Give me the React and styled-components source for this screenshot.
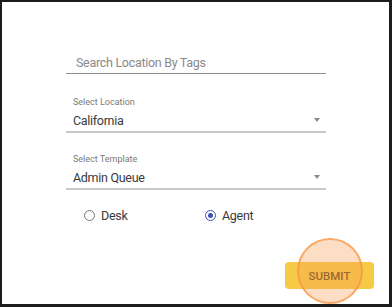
import React from 'react';
import styled, { createGlobalStyle } from 'styled-components';

const GlobalStyle = createGlobalStyle`
  html, body {
    margin: 0;
    padding: 0;
    background: #fff;
    font-family: Roboto, "Liberation Sans", Arial, sans-serif;
  }
`;

const Frame = styled.div`
  box-sizing: border-box;
  width: 392px;
  height: 307px;
  border: 2px solid #1c1c1c;
  border-right-width: 3px;
  border-bottom-width: 3px;
  padding: 51px 0 0 64px;
  display: flex;
  flex-direction: column;
`;

const Form = styled.div`
  width: 260px;
  display: flex;
  flex-direction: column;
`;

const SearchInput = styled.div`
  height: 20px;
  line-height: 20px;
  padding-left: 10px;
  font-size: 12.5px;
  letter-spacing: -0.3px;
  color: #8a8a8a;
  border-bottom: 1px solid #8c8c8c;
`;

const Field = styled.div`
  margin-top: ${({ $gap }) => $gap}px;
  padding-left: 7px;
  border-bottom: 2px solid #c9c9c9;
  padding-bottom: 2px;
`;

const Label = styled.div`
  font-size: 9px;
  line-height: 12px;
  color: #7a7a7a;
`;

const ValueRow = styled.div`
  display: flex;
  align-items: center;
  justify-content: space-between;
  margin-top: 3px;
  height: 18px;
  font-size: 12.5px;
  letter-spacing: -0.3px;
  color: #3a3a3a;
`;

const Caret = styled.span`
  width: 0;
  height: 0;
  margin-right: 6px;
  border-left: 3px solid transparent;
  border-right: 3px solid transparent;
  border-top: 4px solid #8a8a8a;
`;

const RadioRow = styled.div`
  display: flex;
  margin-top: 17px;
  padding-left: 18px;
  height: 16px;
`;

const RadioOption = styled.label`
  display: flex;
  align-items: center;
  gap: 6px;
  width: 125px;
  font-size: 12.5px;
  letter-spacing: -0.3px;
  color: #3a3a3a;
`;

const RadioCircle = styled.span`
  box-sizing: border-box;
  width: 11px;
  height: 11px;
  border-radius: 50%;
  border: 1.3px solid ${({ $checked }) => ($checked ? '#3f51b5' : '#777')};
  display: flex;
  align-items: center;
  justify-content: center;

  &::after {
    content: '';
    width: 5px;
    height: 5px;
    border-radius: 50%;
    background: #3f51b5;
    display: ${({ $checked }) => ($checked ? 'block' : 'none')};
  }
`;

const Footer = styled.div`
  display: flex;
  justify-content: flex-end;
  margin-top: 39px;
  padding-right: 15px;
`;

const SubmitButton = styled.button`
  position: relative;
  width: 89px;
  height: 27px;
  border: none;
  border-radius: 4px;
  background: #f6ca45;
  font-family: Roboto, "Liberation Sans", Arial, sans-serif;
  font-size: 11.5px;
  font-weight: 500;
  color: #6b4a1a;
  padding: 0;
`;

const TapRing = styled.span`
  position: absolute;
  left: 12px;
  top: -24px;
  width: 66px;
  height: 66px;
  box-sizing: border-box;
  border-radius: 50%;
  border: 2px solid rgba(247, 150, 70, 0.75);
  background: rgba(248, 160, 90, 0.35);
  pointer-events: none;
`;

const SelectField = ({ label, value, gap }) => (
  <Field $gap={gap}>
    <Label>{label}</Label>
    <ValueRow>
      <span>{value}</span>
      <Caret />
    </ValueRow>
  </Field>
);

const Radio = ({ label, checked }) => (
  <RadioOption>
    <RadioCircle $checked={checked} />
    {label}
  </RadioOption>
);

export default function App() {
  return (
    <>
      <GlobalStyle />
      <Frame>
        <Form>
          <SearchInput>Search Location By Tags</SearchInput>
          <SelectField label="Select Location" value="California" gap={22} />
          <SelectField label="Select Template" value="Admin Queue" gap={20} />
          <RadioRow>
            <Radio label="Desk" />
            <Radio label="Agent" checked />
          </RadioRow>
        </Form>
        <Footer>
          <SubmitButton>
            SUBMIT
            <TapRing />
          </SubmitButton>
        </Footer>
      </Frame>
    </>
  );
}
